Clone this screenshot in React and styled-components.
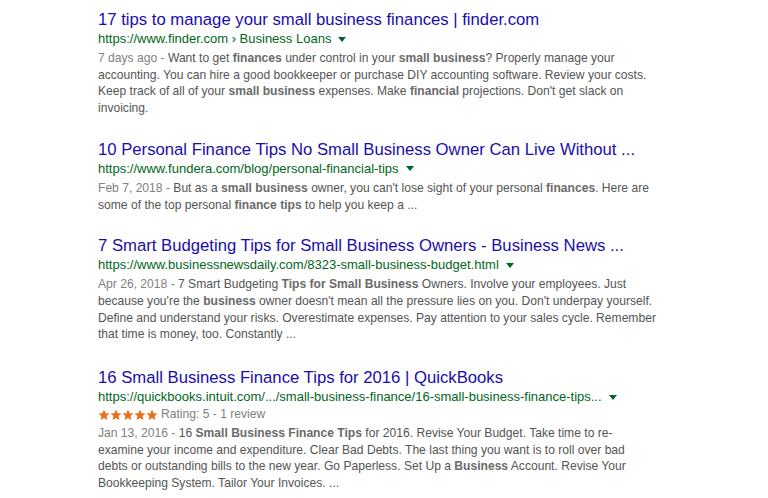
import React from "react";
import styled, { createGlobalStyle } from "styled-components";

const Global = createGlobalStyle`
  html, body { margin: 0; padding: 0; background: #fff; }
  body { font-family: "Liberation Sans", Arial, sans-serif; }
`;

const Page = styled.div`
  width: 768px;
  height: 498px;
  overflow: hidden;
  box-sizing: border-box;
  padding: 9px 0 0 98px;
  display: flex;
  flex-direction: column;
  gap: 22px;
`;

const Result = styled.div`
  display: flex;
  flex-direction: column;
  width: 580px;
  margin-top: ${(p) => (p.$rich ? "2px" : "0")};
`;

const Title = styled.a`
  font-size: 16.7px;
  line-height: 21px;
  color: #1a0dab;
  text-decoration: none;
  white-space: nowrap;
`;

const UrlRow = styled.div`
  display: flex;
  align-items: center;
  font-size: 13px;
  line-height: 17px;
  color: #006621;
  white-space: nowrap;
`;

const Caret = styled.span`
  display: inline-block;
  width: 0;
  height: 0;
  margin-left: 7px;
  margin-top: 1px;
  border-left: 4px solid transparent;
  border-right: 4px solid transparent;
  border-top: 5px solid #006621;
`;

const Snippet = styled.div`
  margin-top: ${(p) => (p.$afterRating ? "2px" : "3px")};
  display: flex;
  flex-direction: column;
  font-size: 12.1px;
  line-height: 16.7px;
  color: #545454;
`;

const Line = styled.div`
  white-space: nowrap;
`;

const Date = styled.span`
  color: #808080;
`;

const B = styled.b`
  color: #6a6a6a;
  font-weight: bold;
`;

const RatingRow = styled.div`
  display: flex;
  align-items: center;
  gap: 3px;
  margin-top: 1px;
  font-size: 12.1px;
  line-height: 17px;
  color: #808080;
`;

const Stars = styled.span`
  display: flex;
`;

const Star = () => (
  <svg width="12" height="12" viewBox="0 0 24 24">
    <path
      fill="#e7711b"
      d="M12 1l3.2 7.3 7.9.7-6 5.2 1.8 7.8L12 18l-6.9 4 1.8-7.8-6-5.2 7.9-.7z"
    />
  </svg>
);

const results = [
  {
    title: "17 tips to manage your small business finances | finder.com",
    url: "https://www.finder.com › Business Loans",
    date: "7 days ago",
    lines: [
      <>Want to get <B>finances</B> under control in your <B>small business</B>? Properly manage your</>,
      <>accounting. You can hire a good bookkeeper or purchase DIY accounting software. Review your costs.</>,
      <>Keep track of all of your <B>small business</B> expenses. Make <B>financial</B> projections. Don't get slack on</>,
      <>invoicing.</>,
    ],
  },
  {
    title: "10 Personal Finance Tips No Small Business Owner Can Live Without ...",
    url: "https://www.fundera.com/blog/personal-financial-tips",
    date: "Feb 7, 2018",
    lines: [
      <>But as a <B>small business</B> owner, you can't lose sight of your personal <B>finances</B>. Here are</>,
      <>some of the top personal <B>finance tips</B> to help you keep a ...</>,
    ],
  },
  {
    title: "7 Smart Budgeting Tips for Small Business Owners - Business News ...",
    url: "https://www.businessnewsdaily.com/8323-small-business-budget.html",
    date: "Apr 26, 2018",
    lines: [
      <>7 Smart Budgeting <B>Tips for Small Business</B> Owners. Involve your employees. Just</>,
      <>because you're the <B>business</B> owner doesn't mean all the pressure lies on you. Don't underpay yourself.</>,
      <>Define and understand your risks. Overestimate expenses. Pay attention to your sales cycle. Remember</>,
      <>that time is money, too. Constantly ...</>,
    ],
  },
  {
    title: "16 Small Business Finance Tips for 2016 | QuickBooks",
    url: "https://quickbooks.intuit.com/.../small-business-finance/16-small-business-finance-tips...",
    rating: true,
    date: "Jan 13, 2016",
    lines: [
      <>16 <B>Small Business Finance Tips</B> for 2016. Revise Your Budget. Take time to re-</>,
      <>examine your income and expenditure. Clear Bad Debts. The last thing you want is to roll over bad</>,
      <>debts or outstanding bills to the new year. Go Paperless. Set Up a <B>Business</B> Account. Revise Your</>,
      <>Bookkeeping System. Tailor Your Invoices. ...</>,
    ],
  },
];

export default function App() {
  return (
    <>
      <Global />
      <Page>
        {results.map((r, i) => (
          <Result key={i} $rich={r.rating}>
            <Title href="#">{r.title}</Title>
            <UrlRow>
              {r.url}
              <Caret />
            </UrlRow>
            {r.rating && (
              <RatingRow>
                <Stars>
                  {[0, 1, 2, 3, 4].map((s) => (
                    <Star key={s} />
                  ))}
                </Stars>
                <span>Rating: 5 - 1 review</span>
              </RatingRow>
            )}
            <Snippet $afterRating={r.rating}>
              {r.lines.map((l, j) => (
                <Line key={j}>
                  {j === 0 && <Date>{r.date} - </Date>}
                  {l}
                </Line>
              ))}
            </Snippet>
          </Result>
        ))}
      </Page>
    </>
  );
}
